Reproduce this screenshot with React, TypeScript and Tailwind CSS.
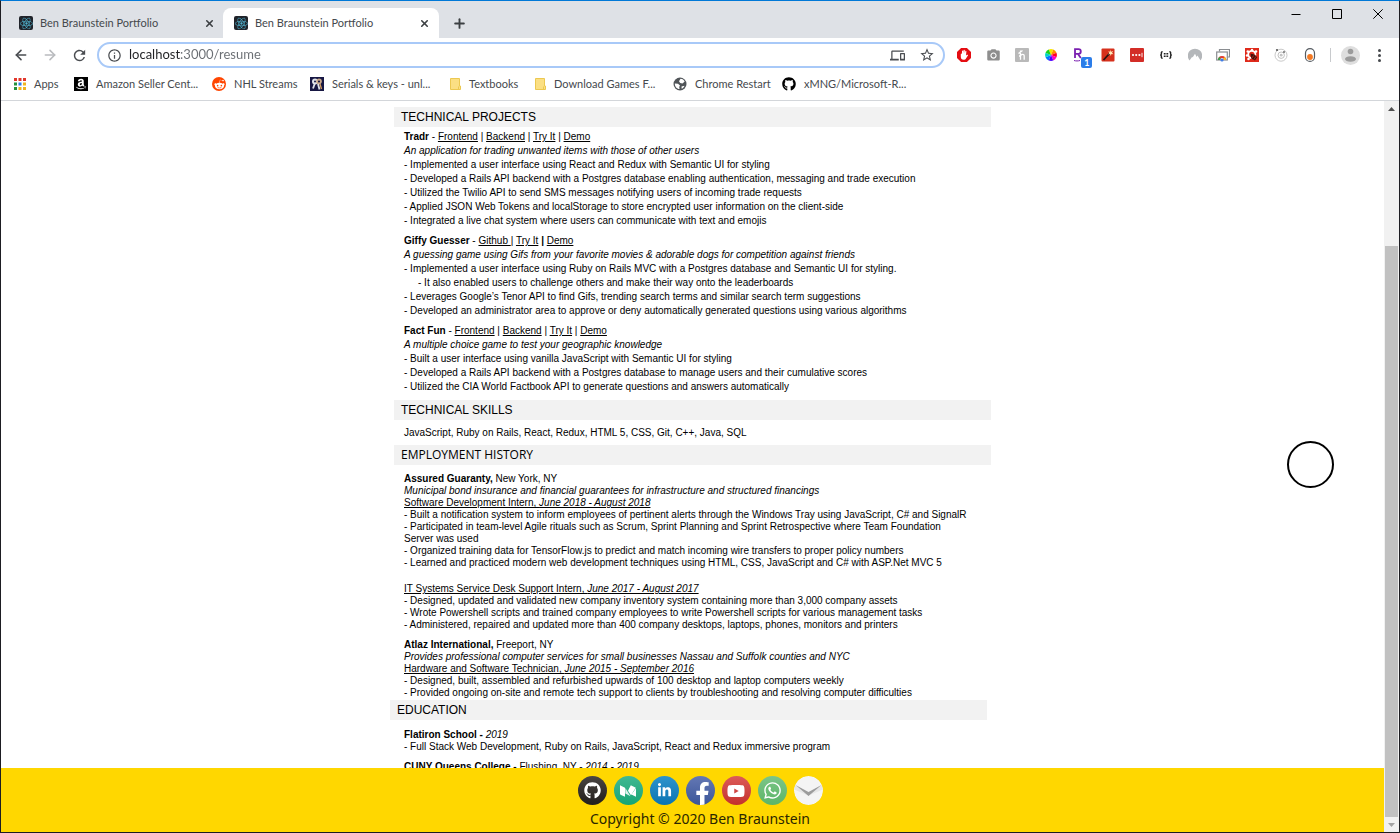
import React from "react";
import { ArrowLeft, ArrowRight, Plus, X } from "lucide-react";
import {
  FaReact,
  FaAmazon,
  FaRedditAlien,
  FaGithub,
  FaLinkedinIn,
  FaFacebookF,
  FaYoutube,
  FaWhatsapp,
} from "react-icons/fa";
import { MdRefresh, MdDevices, MdStarBorder, MdInfoOutline, MdCameraAlt } from "react-icons/md";

const ICON = "block size-[14px] shrink-0";

function Tab({ title, active = false }: { title: string; active?: boolean }) {
  return (
    <div
      className={
        active
          ? "flex h-[30px] w-[216px] items-center rounded-t-lg bg-white pr-[9px] pl-[11px]"
          : "flex h-[30px] w-[215px] items-center pr-2 pl-[11px]"
      }
    >
      <span className="grid size-[14px] place-items-center rounded-[2px] bg-[#20232a]">
        <FaReact className="size-[13px] text-[#4fb3cf]" />
      </span>
      <span className="ml-[7px] flex-1 text-[11px] text-[#45494d]">{title}</span>
      <button aria-label="Close tab" className="text-[#3c4043]">
        <X className="size-[11px]" strokeWidth={3.5} />
      </button>
    </div>
  );
}

function WindowButtons() {
  return (
    <div className="ml-auto flex h-[26px] items-center text-black">
      <button aria-label="Minimize" className="grid h-full w-[41px] place-items-center">
        <svg className="size-[10px]" viewBox="0 0 10 10" stroke="currentColor" fill="none">
          <path d="M0.5 5.5h9" />
        </svg>
      </button>
      <button aria-label="Maximize" className="grid h-full w-[41px] place-items-center">
        <svg className="size-[10px]" viewBox="0 0 10 10" stroke="currentColor" fill="none">
          <path d="M0.5 0.5h9v9h-9z" />
        </svg>
      </button>
      <button aria-label="Close" className="grid h-full w-[42px] place-items-center">
        <svg className="size-[10px]" viewBox="0 0 10 10" stroke="currentColor" fill="none">
          <path d="M0.3 0.3l9.4 9.4M9.7 0.3L0.3 9.7" />
        </svg>
      </button>
    </div>
  );
}

function AdBlockIcon() {
  return (
    <svg className={ICON} viewBox="0 0 14 14">
      <path d="M4.1 0h5.8L14 4.1v5.8L9.9 14H4.1L0 9.900V4.1z" fill="#e40d12" />
      <path
        d="M3.800 6.200c0-.8 1.100-.8 1.100 0V6.500l.1-3.400c0-.8 1.100-.8 1.200 0l.1 2.200.2-2.900c.1-.8 1.200-.8 1.300 0l.1 2.900.4-2.100c.2-.7 1.200-.5 1.100.2L9 7.600l1-.8c.7-.5 1.300.2.9.8L9 10.400c-.6 1-1.300 1.400-2.300 1.400-1.900 0-2.900-1.200-2.900-3z"
        fill="#fff"
      />
    </svg>
  );
}

function HoneyIcon() {
  return (
    <svg className={ICON} viewBox="0 0 14 14">
      <rect width="14" height="14" rx="1" fill="#b9b9b9" />
      <path
        d="M5.500 11.800V2.500M3.500 5.500L7.500 2.500M5.500 8c.8-2 3.700-2.200 3.700 0v3.800M4 8h2"
        stroke="#fff"
        strokeWidth="1.300"
        fill="none"
      />
    </svg>
  );
}

function ColorWheelIcon() {
  return (
    <svg className={ICON} viewBox="-7 -7 14 14">
      <path d="M0 0L-2.300-5.500A6 6 0 0 1 2.300-5.500z" fill="#f6e500" />
      <path d="M0 0L2.300-5.500A6 6 0 0 1 5.500-2.300z" fill="#ff8c00" />
      <path d="M0 0L5.500-2.300A6 6 0 0 1 5.500 2.300z" fill="#ff0022" />
      <path d="M0 0L5.500 2.300A6 6 0 0 1 2.300 5.500z" fill="#ff00c8" />
      <path d="M0 0L2.300 5.500A6 6 0 0 1-2.300 5.500z" fill="#4b00ff" />
      <path d="M0 0L-2.300 5.500A6 6 0 0 1-5.500 2.300z" fill="#0077ff" />
      <path d="M0 0L-5.500 2.300A6 6 0 0 1-5.500-2.300z" fill="#00d5c8" />
      <path d="M0 0L-5.500-2.300A6 6 0 0 1-2.300-5.500z" fill="#19d219" />
    </svg>
  );
}

function RakutenIcon() {
  return (
    <span className="relative block size-[14px]">
      <svg className={ICON} viewBox="0 0 14 14" fill="none" stroke="#7a1fb0">
        <path d="M3 10V1.200h3.500a2.200 2.200 0 0 1 0 4.600H3M6 6l2.800 4" strokeWidth="1.800" />
        <path d="M2 12.500c2 .6 4 .6 6 0" strokeWidth="1" />
      </svg>
      <span className="absolute top-[9px] left-[9px] grid size-[11px] place-items-center rounded-[2px] bg-[#2b7de9] text-[9px] leading-none font-bold text-white">
        1
      </span>
    </span>
  );
}

function WandIcon() {
  return (
    <svg className={ICON} viewBox="0 0 14 14">
      <rect x="0.500" y="0.500" width="13" height="13" rx="1" fill="#d6301c" />
      <path d="M2.500 12L8.500 5.500" stroke="#2a1212" strokeWidth="1.800" />
      <path
        d="M9.500 1.500l.6 2.200 2.200-.6-1.300 1.700 1.500 1.400-2.100-.1-.5 2-.9-2-2 .3 1.400-1.500L7.300 3.300l1.900.5z"
        fill="#ffe9b8"
      />
    </svg>
  );
}

function PasswordIcon() {
  return (
    <svg className={ICON} viewBox="0 0 14 14">
      <rect width="14" height="14" rx="1" fill="#d32d27" />
      <circle cx="3" cy="7" r="1.100" fill="#fff" />
      <circle cx="6.200" cy="7" r="1.100" fill="#fff" />
      <circle cx="9.400" cy="7" r="1.100" fill="#fff" />
      <path d="M12 4.800v4.400" stroke="#fff" strokeWidth=".9" />
    </svg>
  );
}

function JsonIcon() {
  return (
    <svg className={ICON} viewBox="0 0 14 14" fill="none" stroke="#222">
      <path
        d="M3.600 3.800C2 3.800 2.400 5 2.400 6 2.400 7 1.200 7 1.200 7s1.200 0 1.200 1-.4 2.200 1.200 2.200M10.400 3.800c1.600 0 1.200 1.200 1.200 2.200 0 1 1.200 1 1.200 1s-1.200 0-1.200 1 .4 2.200-1.200 2.200"
        strokeWidth="1.400"
      />
      <path d="M4.800 5.800h1.800M7.400 5.800h1.800M4.800 8.200h1.800M7.400 8.200h1.800" strokeWidth="1.500" />
    </svg>
  );
}

function MountainIcon() {
  return (
    <svg className={ICON} viewBox="0 0 14 14">
      <path
        d="M1.500 12.500A7.200 7.200 0 1 1 12.500 12.500L9.500 7.600 8.600 9 7 5.800 4.600 9.400 4.200 8.800z"
        fill="#b4b7ba"
      />
    </svg>
  );
}

function CastTabIcon() {
  return (
    <svg className={ICON} viewBox="0 0 14 14">
      <path d="M3.500 3.500V1.500h10v7.500h-2" fill="none" stroke="#8a8d91" strokeWidth="1.200" />
      <rect x="0.700" y="4" width="10.600" height="8" fill="#fff" stroke="#8a8d91" strokeWidth="1.200" />
      <path d="M2 12a4 4 0 0 1 8 0H8a2 2 0 0 0-4 0z" fill="#e23b2e" />
      <path d="M2 12a4 4 0 0 1 1.300-3l1.500 1.500A2 2 0 0 0 4 12z" fill="#2fa24c" />
      <path d="M10 12a4 4 0 0 0-1.300-3l-1.500 1.500A2 2 0 0 1 8 12z" fill="#f8c325" />
      <circle cx="6" cy="12" r="1.600" fill="#3f7de8" />
    </svg>
  );
}

function GearBugIcon() {
  return (
    <svg className={ICON} viewBox="0 0 14 14">
      <rect width="14" height="14" fill="#df2a1b" />
      <circle cx="6.800" cy="6.500" r="3.600" fill="none" stroke="#fff" strokeWidth="1.800" />
      <circle cx="2.800" cy="3.500" r="1.300" fill="#fff" />
      <circle cx="7" cy="2" r="1.200" fill="#fff" />
      <circle cx="11" cy="3.500" r="1.300" fill="#fff" />
      <circle cx="2" cy="7.500" r="1.200" fill="#fff" />
      <circle cx="3.500" cy="11" r="1.300" fill="#fff" />
      <path d="M5.500 5.500l4.500 1.200 2.200 2.600L10 12.500 6.200 10.500z" fill="#40120e" />
      <path d="M6.500 10.500l2.200-3M9 11.500l1.800-3" stroke="#df2a1b" strokeWidth=".7" />
    </svg>
  );
}

function OrbitIcon() {
  return (
    <svg className={ICON} viewBox="0 0 14 14" fill="none">
      <circle cx="7" cy="7.200" r="6" stroke="#c9c9c9" />
      <circle cx="7.200" cy="7.200" r="3.200" stroke="#c0c0c0" />
      <circle cx="7.200" cy="7.200" r="1.400" fill="#c4c4c4" />
      <circle cx="3" cy="2" r="1.100" fill="#555" />
      <circle cx="10" cy="4" r="1.100" fill="#777" />
    </svg>
  );
}

function ToggleIcon() {
  return (
    <svg className={ICON} viewBox="0 0 14 14">
      <rect x="2.500" y="0.600" width="9" height="12.800" rx="4.500" fill="#fff" stroke="#555b61" strokeWidth="1.200" />
      <circle cx="7" cy="9" r="2.900" fill="#f47a24" />
    </svg>
  );
}

const EXTENSIONS: { label: string; icon: React.ReactNode }[] = [
  { label: "Ad blocker", icon: <AdBlockIcon /> },
  { label: "Screenshot", icon: <MdCameraAlt className="size-[15px] text-[#8e8e8e]" /> },
  { label: "Coupons", icon: <HoneyIcon /> },
  { label: "Color picker", icon: <ColorWheelIcon /> },
  { label: "Cash back", icon: <RakutenIcon /> },
  { label: "Magic wand", icon: <WandIcon /> },
  { label: "Passwords", icon: <PasswordIcon /> },
  { label: "JSON viewer", icon: <JsonIcon /> },
  { label: "VPN", icon: <MountainIcon /> },
  { label: "Remote desktop", icon: <CastTabIcon /> },
  { label: "Debugger", icon: <GearBugIcon /> },
  { label: "Orbit", icon: <OrbitIcon /> },
  { label: "Toggle", icon: <ToggleIcon /> },
];

function Toolbar() {
  return (
    <div className="flex h-[34px] items-center bg-white">
      <div className="flex w-24 items-center gap-[13px] pl-3">
        <button aria-label="Back" className="text-[#4a4d51]">
          <ArrowLeft className="size-4" strokeWidth={2.4} />
        </button>
        <button aria-label="Forward" className="text-[#b9bbbe]">
          <ArrowRight className="size-4" strokeWidth={2.4} />
        </button>
        <button aria-label="Reload" className="text-[#4a4d51]">
          <MdRefresh className="size-[17px]" />
        </button>
      </div>
      <div className="flex h-[26px] flex-1 items-center rounded-full border-2 border-[#a8c9f8] bg-white px-2 text-[#4a4d51]">
        <MdInfoOutline className="size-[15px]" />
        <input
          aria-label="Address"
          defaultValue="localhost:3000/resume"
          className="ml-[7px] flex-1 bg-[linear-gradient(to_right,#202124_51px,#6a6e73_51px)] bg-clip-text text-[13px] text-transparent outline-none"
        />
        <MdDevices className="size-[15px]" />
        <button aria-label="Bookmark this page" className="ml-[14px]">
          <MdStarBorder className="size-4" />
        </button>
      </div>
      <div className="ml-[5px] grid w-[374px] grid-cols-13">
        {EXTENSIONS.map((e) => (
          <button key={e.label} aria-label={e.label} className="grid place-items-center">
            {e.icon}
          </button>
        ))}
      </div>
      <div className="ml-[6px] h-[14px] w-px bg-[#c8cacd]" />
      <button aria-label="Profile" className="ml-[10px]">
        <svg className="block size-[19px]" viewBox="0 0 19 19">
          <circle cx="9.500" cy="9.500" r="9.500" fill="#dedede" />
          <circle cx="9.500" cy="5.500" r="2.800" fill="#9b9b9b" />
          <ellipse cx="9.500" cy="13" rx="5.500" ry="2.800" fill="#9b9b9b" />
        </svg>
      </button>
      <button aria-label="Menu" className="grid w-[39px] place-items-center">
        <svg className="block h-[13px] w-[3px]" viewBox="0 0 3 13" fill="#46494d">
          <circle cx="1.500" cy="1.600" r="1.500" />
          <circle cx="1.500" cy="6.500" r="1.500" />
          <circle cx="1.500" cy="11.400" r="1.500" />
        </svg>
      </button>
    </div>
  );
}

function AppsIcon() {
  const colors = ["#e2372b", "#e2372b", "#e2372b", "#24913c", "#2b7de9", "#f0b51d", "#24913c", "#f0b51d", "#f0b51d"];
  return (
    <svg className="size-3 shrink-0" viewBox="0 0 12 12">
      {colors.map((c, i) => (
        <rect key={i} x={(i % 3) * 4.5} y={Math.floor(i / 3) * 4.5} width="3" height="3" fill={c} />
      ))}
    </svg>
  );
}

function FolderIcon() {
  return (
    <svg className="h-3 w-[11px] shrink-0" viewBox="0 0 11 12">
      <path d="M0.500 0.500h9v7.500h1v3.500h-10z" fill="#fbdf83" stroke="#ecc850" />
      <path d="M8.500 8.500v3" stroke="#ecc850" />
    </svg>
  );
}

function KeysIcon() {
  return (
    <svg className={ICON} viewBox="0 0 14 14">
      <rect width="14" height="14" fill="#171743" />
      <circle cx="5" cy="4.500" r="2" fill="none" stroke="#dfe2ea" strokeWidth="2" />
      <circle cx="9" cy="4.500" r="2" fill="none" stroke="#c9a98c" strokeWidth="1.800" />
      <path d="M5 6L3 11.500M8 7l1.500 5.500" stroke="#dfe2ea" strokeWidth="1.800" />
      <path d="M10 7l1.500 5" stroke="#d49a5c" strokeWidth="1.300" />
    </svg>
  );
}

function GlobeIcon() {
  return (
    <svg className={ICON} viewBox="0 0 14 14">
      <circle cx="7" cy="7" r="6.500" fill="#505458" />
      <path d="M7.500 1.800c2 0 3.400 1.200 4.200 2.800L9.500 6.500 7.200 6 6 4.200z" fill="#fff" />
      <path d="M1.800 6.500l3.200.3 2 1.700-.8 1.600.4 2C3.700 12 1.800 9.500 1.800 6.500z" fill="#fff" />
      <path d="M8.500 9.500l3-.8c-.4 1.300-1.500 2.600-2.800 3.100z" fill="#fff" />
    </svg>
  );
}

function Bookmark({ icon, label, width }: { icon: React.ReactNode; label: string; width: string }) {
  return (
    <a href="#" className={`flex shrink-0 items-center gap-2 whitespace-nowrap ${width}`}>
      {icon}
      {label}
    </a>
  );
}

function Bookmarks() {
  return (
    <nav className="flex h-[29px] items-center border-b border-[#d3d6da] bg-white pb-1 pl-[13px] text-[11px] text-[#45494d]">
      <Bookmark width="w-[60px]" label="Apps" icon={<AppsIcon />} />
      <Bookmark
        width="w-[138px]"
        label="Amazon Seller Cent..."
        icon={
          <span className="grid size-[14px] place-items-center bg-black">
            <FaAmazon className="size-3 text-white" />
          </span>
        }
      />
      <Bookmark
        width="w-[98px]"
        label="NHL Streams"
        icon={
          <span className="grid size-[14px] place-items-center rounded-full bg-[#ff4500]">
            <FaRedditAlien className="size-[11px] text-white" />
          </span>
        }
      />
      <Bookmark width="w-[140px]" label="Serials & keys - unl..." icon={<KeysIcon />} />
      <Bookmark width="w-[85px]" label="Textbooks" icon={<FolderIcon />} />
      <Bookmark width="w-[138px]" label="Download Games F..." icon={<FolderIcon />} />
      <Bookmark width="w-[109px]" label="Chrome Restart" icon={<GlobeIcon />} />
      <Bookmark width="w-[130px]" label="xMNG/Microsoft-R..." icon={<FaGithub className="size-[14px] text-black" />} />
    </nav>
  );
}

function L({ children }: { children: React.ReactNode }) {
  return (
    <a href="#" className="underline">
      {children}
    </a>
  );
}

const HEADING = "flex h-5 items-center bg-[#f2f2f2] px-[7px] text-[12px]";

function Resume() {
  return (
    <article className="mx-auto w-[597px] pt-[6px] font-['Liberation_Sans',Arial,sans-serif] text-[10px] text-black">
      <h2 className={HEADING}>TECHNICAL PROJECTS</h2>
      <div className="flex flex-col gap-[6px] px-[10px] pt-[3px] pb-[6px] leading-[14px]">
        <section>
          <p>
            <b>Tradr</b> - <L>Frontend</L> | <L>Backend</L> | <L>Try It</L> | <L>Demo</L>
          </p>
          <p className="italic">An application for trading unwanted items with those of other users</p>
          <p>- Implemented a user interface using React and Redux with Semantic UI for styling</p>
          <p>- Developed a Rails API backend with a Postgres database enabling authentication, messaging and trade execution</p>
          <p>- Utilized the Twilio API to send SMS messages notifying users of incoming trade requests</p>
          <p>- Applied JSON Web Tokens and localStorage to store encrypted user information on the client-side</p>
          <p>- Integrated a live chat system where users can communicate with text and emojis</p>
        </section>
        <section>
          <p>
            <b>Giffy Guesser</b> - <L>Github </L>| <L>Try It</L> <b>|</b> <L>Demo</L>
          </p>
          <p className="italic">A guessing game using Gifs from your favorite movies &amp; adorable dogs for competition against friends</p>
          <p>- Implemented a user interface using Ruby on Rails MVC with a Postgres database and Semantic UI for styling.</p>
          <p className="pl-[14px]">- It also enabled users to challenge others and make their way onto the leaderboards</p>
          <p>- Leverages Google’s Tenor API to find Gifs, trending search terms and similar search term suggestions</p>
          <p>- Developed an administrator area to approve or deny automatically generated questions using various algorithms</p>
        </section>
        <section>
          <p>
            <b>Fact Fun</b> - <L>Frontend</L> | <L>Backend</L> | <L>Try It</L> | <L>Demo</L>
          </p>
          <p className="italic">A multiple choice game to test your geographic knowledge</p>
          <p>- Built a user interface using vanilla JavaScript with Semantic UI for styling</p>
          <p>- Developed a Rails API backend with a Postgres database to manage users and their cumulative scores</p>
          <p>- Utilized the CIA World Factbook API to generate questions and answers automatically</p>
        </section>
      </div>

      <h2 className={HEADING}>TECHNICAL SKILLS</h2>
      <p className="px-[10px] pt-[6px] pb-[5px] leading-[14px]">
        JavaScript, Ruby on Rails, React, Redux, HTML 5, CSS, Git, C++, Java, SQL
      </p>

      <h2 className={`${HEADING} font-['Open_Sans',sans-serif]`}>EMPLOYMENT HISTORY</h2>
      <div className="px-[10px] pt-2 pb-px leading-[12px]">
        <p>
          <b>Assured Guaranty,</b> New York, NY
        </p>
        <p className="italic">Municipal bond insurance and financial guarantees for infrastructure and structured financings</p>
        <p className="underline">
          Software Development Intern, <i>June 2018 - August 2018</i>
        </p>
        <p>- Built a notification system to inform employees of pertinent alerts through the Windows Tray using JavaScript, C# and SignalR</p>
        <p>
          - Participated in team-level Agile rituals such as Scrum, Sprint Planning and Sprint Retrospective where Team Foundation
          <br />
          Server was used
        </p>
        <p>- Organized training data for TensorFlow.js to predict and match incoming wire transfers to proper policy numbers</p>
        <p>- Learned and practiced modern web development techniques using HTML, CSS, JavaScript and C# with ASP.Net MVC 5</p>
        <p className="mt-[14px] underline">
          IT Systems Service Desk Support Intern, <i>June 2017 - August 2017</i>
        </p>
        <p>- Designed, updated and validated new company inventory system containing more than 3,000 company assets</p>
        <p>- Wrote Powershell scripts and trained company employees to write Powershell scripts for various management tasks</p>
        <p>- Administered, repaired and updated more than 400 company desktops, laptops, phones, monitors and printers</p>
        <p className="mt-2">
          <b>Atlaz International,</b> Freeport, NY
        </p>
        <p className="italic">Provides professional computer services for small businesses Nassau and Suffolk counties and NYC</p>
        <p className="underline">
          Hardware and Software Technician, <i>June 2015 - September 2016</i>
        </p>
        <p>- Designed, built, assembled and refurbished upwards of 100 desktop and laptop computers weekly</p>
        <p>- Provided ongoing on-site and remote tech support to clients by troubleshooting and resolving computer difficulties</p>
      </div>

      <h2 className={`${HEADING} mr-1 -ml-1`}>EDUCATION</h2>
      <div className="px-[10px] pt-[9px] leading-[12px]">
        <p>
          <b>Flatiron School -</b> <i>2019</i>
        </p>
        <p>- Full Stack Web Development, Ruby on Rails, JavaScript, React and Redux immersive program</p>
        <p className="mt-2">
          <b>CUNY Queens College -</b> Flushing, NY - <i>2014 - 2019</i>
        </p>
      </div>
    </article>
  );
}

const SOCIAL = "grid size-[29px] place-items-center overflow-hidden rounded-full text-white";

function Footer() {
  return (
    <footer className="flex h-16 shrink-0 flex-col items-center bg-[#ffd700] pt-2 pl-[15px]">
      <div className="flex gap-[7px]">
        <a href="#" aria-label="GitHub" className={`${SOCIAL} bg-linear-to-b from-[#4a4542] to-[#221e1c]`}>
          <FaGithub className="size-[17px]" />
        </a>
        <a href="#" aria-label="Medium" className={`${SOCIAL} bg-linear-to-b from-[#3fb893] to-[#12a574]`}>
          <svg className="h-3 w-4" viewBox="0 0 16 12" fill="#fff">
            <path d="M0 0.300l5 2.500v9L0.500 9.700Q0 9.400 0 8.700z" />
            <path d="M5.300 2.900l5.200 8.300-5.200-2.600z" opacity=".85" />
            <path d="M8 5.800L10.800 0.300l5 2.400-4.800 7.500z" />
            <path d="M16 3.300v8.500l-4.600-2.200z" />
          </svg>
        </a>
        <a href="#" aria-label="LinkedIn" className={`${SOCIAL} bg-linear-to-b from-[#2d94cc] to-[#0774b3]`}>
          <FaLinkedinIn className="size-[15px]" />
        </a>
        <a href="#" aria-label="Facebook" className={`${SOCIAL} bg-linear-to-b from-[#6478b4] to-[#3c5699]`}>
          <FaFacebookF className="mt-[6px] ml-1 size-[23px]" />
        </a>
        <a href="#" aria-label="YouTube" className={`${SOCIAL} bg-linear-to-b from-[#dc5a58] to-[#c4302d]`}>
          <FaYoutube className="size-[18px]" />
        </a>
        <a href="#" aria-label="WhatsApp" className={`${SOCIAL} bg-linear-to-b from-[#7cc588] to-[#5bb567]`}>
          <FaWhatsapp className="size-[19px]" />
        </a>
        <a href="#" aria-label="Email" className={SOCIAL}>
          <svg className="block size-[29px]" viewBox="0 0 29 29">
            <circle cx="14.500" cy="14.500" r="14.500" fill="#f4f4f4" />
            <path d="M1 9L14.500 17 28 9l.8 4.500L17 18.500l-2.500 1-2.500-1L.2 13.500z" fill="#e6e6e6" />
            <path d="M1.500 9l13 7 13-7L14.500 20z" fill="#9c9c9c" />
          </svg>
        </a>
      </div>
      <p className="font-['Noto_Sans',sans-serif] text-[14px] leading-[27px] text-[#2b2600]">
        Copyright © 2020 Ben Braunstein
      </p>
    </footer>
  );
}

function Scrollbar() {
  return (
    <div aria-hidden="true" className="flex w-[15px] shrink-0 flex-col bg-[#f1f1f1]">
      <div className="grid h-[15px] place-items-center">
        <svg className="h-1 w-[7px]" viewBox="0 0 7 4" fill="#505050">
          <path d="M0 4L3.500 0 7 4z" />
        </svg>
      </div>
      <div className="flex-130" />
      <div className="mx-px flex-571 bg-[#c1c1c1]" />
      <div className="grid h-[15px] place-items-center">
        <svg className="h-1 w-[7px]" viewBox="0 0 7 4" fill="#a3a3a3">
          <path d="M0 0L3.500 4 7 0z" />
        </svg>
      </div>
    </div>
  );
}

export default function App() {
  return (
    <div className="flex h-screen flex-col overflow-hidden border border-[#1d1d22] border-t-[#0078d7] bg-white font-[Lato,'Noto_Sans',sans-serif]">
      <header className="shrink-0">
        <div className="flex h-[37px] bg-[#dee1e6] pl-[7px]">
          <div className="flex items-end">
            <Tab title="Ben Braunstein Portfolio" />
            <Tab title="Ben Braunstein Portfolio" active />
            <button aria-label="New tab" className="grid h-[30px] w-[40px] place-items-center text-[#3c4043]">
              <Plus className="size-[15px]" strokeWidth={3} />
            </button>
          </div>
          <WindowButtons />
        </div>
        <Toolbar />
        <Bookmarks />
      </header>
      <div className="relative flex min-h-0 flex-1">
        <div className="flex min-w-0 flex-1 flex-col">
          <main className="min-h-0 flex-1 overflow-hidden">
            <Resume />
          </main>
          <Footer />
        </div>
        <Scrollbar />
        <div className="absolute top-[340px] right-[65px] size-[47px] rounded-full border-2 border-black" />
      </div>
    </div>
  );
}
